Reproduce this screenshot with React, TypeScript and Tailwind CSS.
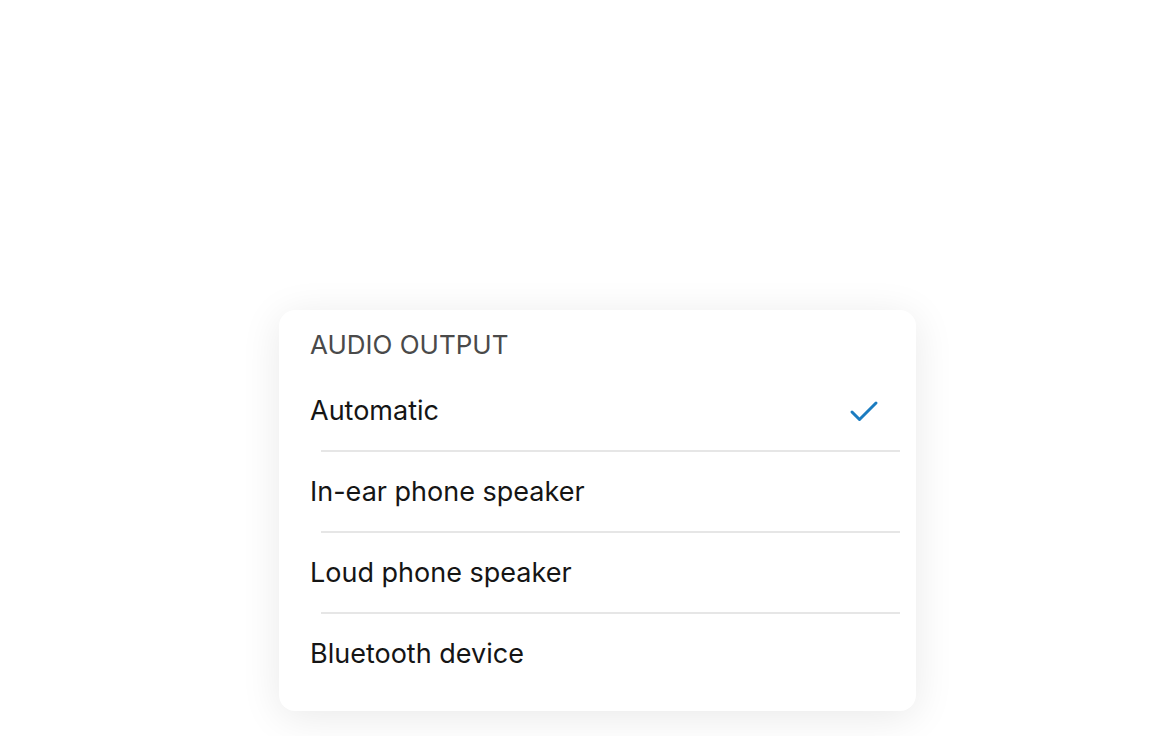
import React from "react";

const options = ["Automatic", "In-ear phone speaker", "Loud phone speaker", "Bluetooth device"];

export default function App() {
  const selected = 0;
  return (
    <div className="min-h-screen w-full bg-white pt-[310px] pl-[279px]" style={{ fontFamily: "Inter, 'Noto Sans', sans-serif" }}>
      <div className="w-[637px] h-[401px] rounded-[16px] bg-white shadow-[0_6px_40px_rgba(0,0,0,0.09)] pt-[19px]">
        {/* Header */}
        <div className="h-8 leading-8 pl-[31px] text-[26px] text-[#4a4a4a] mb-[10px]">AUDIO OUTPUT</div>

        {options.map((label, i) => (
          <div key={label}>
            <div className="h-[79px] flex items-center justify-between pl-[31px] pr-[36px] pt-[2px]">
              <span className="text-[27px] text-[#151515]">{label}</span>
              {i === selected && (
                <svg width="32" height="24" viewBox="0 0 32 24" fill="none" className="-mt-[2px]">
                  <polyline
                    points="4,13 11.5,20.5 28,4"
                    stroke="#1b7cc0"
                    strokeWidth="3"
                    strokeLinecap="round"
                    strokeLinejoin="round"
                  />
                </svg>
              )}
            </div>
            {i < options.length - 1 && <div className="h-[2px] ml-[42px] mr-[16px] bg-[#e6e6e6]" />}
          </div>
        ))}
      </div>
    </div>
  );
}
